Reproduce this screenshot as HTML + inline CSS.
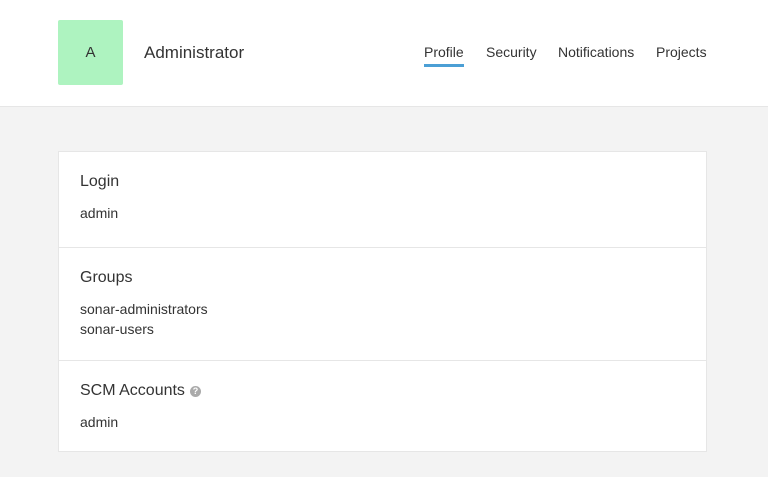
<!DOCTYPE html>
<html><head><style>
body{margin:0;width:768px;height:477px;background:#f3f3f3;font-family:"Liberation Sans",sans-serif;color:#333;overflow:hidden;position:relative}
.hdr{position:absolute;left:0;top:0;width:768px;height:106px;background:#fff;border-bottom:1px solid #e6e6e6}
.av{position:absolute;left:58px;top:20px;width:65px;height:65px;background:#aef3c0;border-radius:2px;text-align:center;line-height:65px;font-size:15px}
.name{position:absolute;left:144px;top:43px;font-size:17px;line-height:20px}
.nav a{position:absolute;top:43px;font-size:14px;line-height:18px;color:#333}
.ul{position:absolute;left:424px;top:64px;width:40px;height:3px;background:#4b9fd5}
.card{position:absolute;left:58px;top:151px;width:649px;height:301px;background:#fff;border:1px solid #e6e6e6;box-sizing:border-box}
.sec{position:absolute;left:21px}
h3{margin:0;font-weight:normal;font-size:16px;line-height:20px}
p{margin:0;font-size:14px;line-height:20px}
.div{position:absolute;left:0;width:647px;height:1px;background:#e6e6e6}
.q{display:inline-block;width:11px;height:11px;border-radius:50%;background:#aaa;color:#fff;font-size:9px;line-height:11px;text-align:center;font-weight:bold;vertical-align:1px;margin-left:5px}
</style></head><body>
<div class="hdr">
<div class="av">A</div>
<div class="name">Administrator</div>
<div class="nav"><a style="left:424px">Profile</a><a style="left:486px">Security</a><a style="left:558px">Notifications</a><a style="left:656px">Projects</a></div>
<div class="ul"></div>
</div>
<div class="card">
<div class="sec" style="top:20px"><h3>Login</h3><p style="margin-top:11px">admin</p></div>
<div class="div" style="top:95px"></div>
<div class="sec" style="top:116px"><h3>Groups</h3><p style="margin-top:11px">sonar-administrators</p><p>sonar-users</p></div>
<div class="div" style="top:208px"></div>
<div class="sec" style="top:229px"><h3>SCM Accounts<span class="q">?</span></h3><p style="margin-top:11px">admin</p></div>
</div>
</body></html>
